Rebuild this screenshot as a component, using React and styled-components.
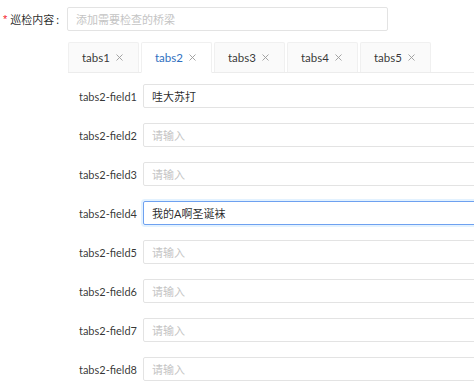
import styled, { createGlobalStyle } from "styled-components";

const Global = createGlobalStyle`
  html, body {
    margin: 0;
    padding: 0;
    background: #fff;
    overflow: hidden;
  }
  body {
    font-family: Lato, "Noto Sans CJK SC", sans-serif;
    font-size: 11px;
    color: rgba(0, 0, 0, 0.85);
  }
`;

const Page = styled.div`
  width: 100%;
  overflow: hidden;
  padding-top: 7px;
  display: flex;
  flex-direction: column;
`;

const TopRow = styled.div`
  display: flex;
  align-items: center;
  height: 24px;
`;

const TopLabel = styled.label`
  width: 67px;
  flex-shrink: 0;
  box-sizing: border-box;
  padding-left: 3px;
  display: flex;
  align-items: center;
  font-size: 11px;
  color: rgba(0, 0, 0, 0.85);
  white-space: nowrap;
`;

const Star = styled.span`
  color: #f5222d;
  margin-right: 3px;
  font-family: "Liberation Sans", sans-serif;
`;

const Colon = styled.span`
  margin-left: 2px;
`;

const Input = styled.input`
  box-sizing: border-box;
  width: ${(p) => p.$width}px;
  height: 24px;
  padding: 0 8px;
  border: 1px solid ${(p) => (p.$focused ? "#6ea1f0" : "#e3e3e3")};
  box-shadow: ${(p) => (p.$focused ? "0 0 0 2px rgba(24, 144, 255, 0.12)" : "none")};
  border-radius: 2px;
  font-family: Lato, "Noto Sans CJK SC", sans-serif;
  font-size: 11px;
  color: rgba(0, 0, 0, 0.85);
  background: #fff;
  outline: none;
  flex-shrink: 0;

  &::placeholder {
    color: #c4c4c4;
  }
`;

const Section = styled.div`
  margin-left: 68px;
  margin-top: 11px;
`;

const TabBar = styled.div`
  display: flex;
  gap: 2px;
  height: 31px;
  box-sizing: border-box;
  border-bottom: 1px solid #ececec;
`;

const Tab = styled.div`
  width: 71px;
  flex-shrink: 0;
  box-sizing: border-box;
  padding: 0 15px 0 13px;
  display: flex;
  align-items: center;
  justify-content: space-between;
  background: ${(p) => (p.$active ? "#fff" : "#fafafa")};
  border: 1px solid #f0f0f0;
  border-bottom: ${(p) => (p.$active ? "1px solid #fff" : "none")};
  border-radius: 2px 2px 0 0;
  color: ${(p) => (p.$active ? "#2f6fc0" : "rgba(0, 0, 0, 0.8)")};
  font-size: 11.5px;
  margin-bottom: ${(p) => (p.$active ? "-1px" : "0")};
  height: ${(p) => (p.$active ? "31px" : "30px")};
`;

const Close = styled.span`
  display: flex;
  color: #9a9a9a;
`;

const Fields = styled.div`
  margin-top: 11px;
  display: flex;
  flex-direction: column;
  gap: 15px;
`;

const FieldRow = styled.div`
  display: flex;
  align-items: center;
  height: 24px;
`;

const FieldLabel = styled.label`
  width: 75px;
  flex-shrink: 0;
  box-sizing: border-box;
  padding-right: 6px;
  text-align: right;
  font-size: 11px;
  color: rgba(0, 0, 0, 0.8);
  white-space: nowrap;
`;

const CloseIcon = () => (
  <svg width="7" height="7" viewBox="0 0 7 7">
    <path d="M0.5 0.5 L6.5 6.5 M6.5 0.5 L0.5 6.5" stroke="currentColor" strokeWidth="0.9" fill="none" />
  </svg>
);

const tabs = ["tabs1", "tabs2", "tabs3", "tabs4", "tabs5"];

const fields = [
  { name: "tabs2-field1", value: "哇大苏打" },
  { name: "tabs2-field2", value: "" },
  { name: "tabs2-field3", value: "" },
  { name: "tabs2-field4", value: "我的A啊圣诞袜", focused: true },
  { name: "tabs2-field5", value: "" },
  { name: "tabs2-field6", value: "" },
  { name: "tabs2-field7", value: "" },
  { name: "tabs2-field8", value: "" },
];

export default function App() {
  return (
    <>
      <Global />
      <Page>
        <TopRow>
          <TopLabel>
            <Star>*</Star>巡检内容<Colon>:</Colon>
          </TopLabel>
          <Input $width={321} placeholder="添加需要检查的桥梁" readOnly />
        </TopRow>
        <Section>
          <TabBar>
            {tabs.map((t) => (
              <Tab key={t} $active={t === "tabs2"}>
                {t}
                <Close>
                  <CloseIcon />
                </Close>
              </Tab>
            ))}
          </TabBar>
          <Fields>
            {fields.map((f) => (
              <FieldRow key={f.name}>
                <FieldLabel>{f.name}</FieldLabel>
                <Input
                  $width={340}
                  $focused={f.focused}
                  placeholder="请输入"
                  defaultValue={f.value}
                  readOnly
                />
              </FieldRow>
            ))}
          </Fields>
        </Section>
      </Page>
    </>
  );
}
